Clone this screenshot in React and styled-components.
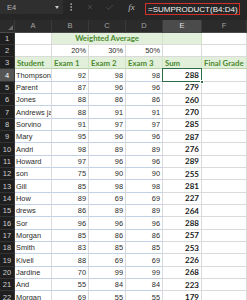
import React from "react";
import styled, { createGlobalStyle } from "styled-components";
import { X, Check, EllipsisVertical } from "lucide-react";

const Global = createGlobalStyle`
  html, body { margin: 0; padding: 0; background: #262626; }
  body { font-family: "Liberation Sans", Arial, sans-serif; overflow: hidden; }
`;

const Page = styled.div`
  width: 247px;
  height: 300px;
  overflow: hidden;
  background: #262626;
`;

const Bar = styled.div`
  display: flex;
  align-items: flex-start;
  height: 17px;
  margin-bottom: 3px;
`;

const NameBox = styled.div`
  width: 63px;
  height: 14px;
  background: #2f2f2f;
  display: flex;
  align-items: center;
  justify-content: space-between;
  padding: 0 4px 0 7px;
  box-sizing: border-box;
  color: #b5b5b5;
  font-size: 7.5px;
`;

const Caret = styled.span`
  width: 0;
  height: 0;
  border-left: 2.5px solid transparent;
  border-right: 2.5px solid transparent;
  border-top: 3px solid #c8c8c8;
`;

const IconSlot = styled.div`
  width: ${({ w }) => w}px;
  height: 14px;
  display: flex;
  align-items: center;
  justify-content: center;
  color: ${({ c }) => c || "#5c5c5c"};
`;

const Fx = styled.span`
  font-family: "Liberation Serif", serif;
  font-style: italic;
  font-size: 9px;
  color: #bdbdbd;
`;

const Formula = styled.div`
  margin-top: 3px;
  width: 95px;
  height: 12px;
  border: 1.5px solid #d2302c;
  box-sizing: border-box;
  display: flex;
  align-items: center;
  padding-left: 2px;
  color: #f2f2f2;
  font-size: 8px;
  white-space: nowrap;
`;

const Grid = styled.div`
  display: grid;
  grid-template-columns: 15px 37px 37px 37px 37px 39px 45px;
  grid-template-rows: 12.5px;
  grid-auto-rows: 12.33px;
`;

const ColHead = styled.div`
  background: ${({ active }) => (active ? "#4b4b4b" : "#2b2b2b")};
  color: ${({ active }) => (active ? "#e0e0e0" : "#a3a3a3")};
  font-size: 7.5px;
  display: flex;
  align-items: center;
  justify-content: center;
  border-right: 1px solid #3a3a3a;
  border-bottom: 1px solid #4a4a4a;
  box-sizing: border-box;
  position: relative;
`;

const Corner = styled(ColHead)`
  justify-content: flex-end;
  align-items: flex-end;
  padding: 0 1px 2px 0;
`;

const RowHead = styled.div`
  background: ${({ active }) => (active ? "#555555" : "#1f1f1f")};
  color: ${({ active }) => (active ? "#ffffff" : "#d0d0d0")};
  font-size: 7.5px;
  display: flex;
  align-items: center;
  justify-content: center;
  border-bottom: 1px solid #333;
  border-right: 1px solid #3a3a3a;
  box-sizing: border-box;
`;

const Cell = styled.div`
  grid-column: ${({ span }) => (span ? `span ${span}` : "auto")};
  background: ${({ bg }) => bg || "#ffffff"};
  color: ${({ color }) => color || "#2b2b2b"};
  font-family: ${({ head, sum }) =>
    head || sum ? `Lato, "Open Sans", sans-serif` : `"Liberation Sans", Arial, sans-serif`};
  font-weight: ${({ head, sum }) => (head || sum ? 700 : 400)};
  font-size: ${({ head, sum }) => (head ? "7.8px" : sum ? "8px" : "7.4px")};
  display: flex;
  align-items: center;
  justify-content: ${({ align }) =>
    align === "right" ? "flex-end" : align === "center" ? "center" : "flex-start"};
  padding: 0 ${({ tight }) => (tight ? "1px" : "2px")};
  box-sizing: border-box;
  border-right: 1px solid ${({ bg }) => (bg ? "#d0e3c4" : "#dadada")};
  border-bottom: 1px solid ${({ line }) => line || "#dadada"};
  white-space: nowrap;
  overflow: hidden;
  position: relative;
`;

const Selected = styled(Cell)`
  overflow: visible;
  z-index: 2;
  &::before {
    content: "";
    position: absolute;
    inset: -1px -1px -1px -1px;
    border: 1.5px solid #2f6b47;
  }
`;

const Handle = styled.span`
  position: absolute;
  right: -3px;
  bottom: -3px;
  width: 4px;
  height: 4px;
  background: #2f6b47;
  border: 1px solid #ffffff;
  box-sizing: border-box;
`;

const GREEN = "#e2efda";
const HEAD = "#4a8a2e";
const BLUE = "#c3d1e6";

const cols = ["A", "B", "C", "D", "E", "F"];

const data = [
  ["Thompson", 92, 98, 98, 288],
  ["Parent", 87, 96, 96, 279],
  ["Jones", 88, 86, 86, 260],
  ["Andrews ja", 88, 91, 91, 270],
  ["Sorvino", 91, 97, 97, 285],
  ["Mary", 95, 96, 96, 287],
  ["Andri", 98, 89, 89, 276],
  ["Howard", 97, 96, 96, 289],
  ["son", 75, 90, 90, 255],
  ["Gill", 85, 98, 98, 281],
  ["How", 89, 69, 69, 227],
  ["drews", 86, 89, 89, 264],
  ["Sor", 96, 96, 96, 288],
  ["Morgan", 85, 86, 86, 257],
  ["Smith", 83, 85, 85, 253],
  ["Kivell", 88, 69, 69, 226],
  ["Jardine", 70, 99, 99, 268],
  ["And", 55, 84, 84, 223],
  ["Morgan", 69, 55, 55, 179],
];

export default function App() {
  return (
    <Page>
      <Global />
      <Bar>
        <NameBox>
          E4
          <Caret />
        </NameBox>
        <IconSlot w={16} c="#a8a8a8">
          <EllipsisVertical size={10} strokeWidth={2.2} />
        </IconSlot>
        <IconSlot w={21}>
          <X size={8} strokeWidth={1.8} />
        </IconSlot>
        <IconSlot w={18}>
          <Check size={9} strokeWidth={1.8} />
        </IconSlot>
        <IconSlot w={27}>
          <Fx>fx</Fx>
        </IconSlot>
        <Formula>=SUMPRODUCT(B4:D4)</Formula>
      </Bar>

      <Grid>
        <Corner>
          <svg width="5" height="5" viewBox="0 0 5 5">
            <polygon points="5,0 5,5 0,5" fill="#6a6a6a" />
          </svg>
        </Corner>
        {cols.map((c) => (
          <ColHead key={c} active={c === "E"}>
            {c}
          </ColHead>
        ))}

        <RowHead>1</RowHead>
        <Cell />
        <Cell span={3} bg={GREEN} color={HEAD} head align="center">
          Weighted Average
        </Cell>
        <Cell bg={GREEN} />
        <Cell />

        <RowHead>2</RowHead>
        <Cell />
        <Cell align="right">20%</Cell>
        <Cell align="right">30%</Cell>
        <Cell align="right">50%</Cell>
        <Cell />
        <Cell />

        <RowHead>3</RowHead>
        {["Student", "Exam 1", "Exam 2", "Exam 3", "Sum", "Final Grade"].map((h) => (
          <Cell key={h} bg={GREEN} color={HEAD} head line="#b9d3a8">
            {h}
          </Cell>
        ))}

        {data.map((r, i) => {
          const n = i + 4;
          const SumCell = n === 4 ? Selected : Cell;
          return (
            <React.Fragment key={n}>
              <RowHead active={n === 4}>{n}</RowHead>
              <Cell line={BLUE} tight>{r[0]}</Cell>
              <Cell line={BLUE} align="right">{r[1]}</Cell>
              <Cell line={BLUE} align="right">{r[2]}</Cell>
              <Cell line={BLUE} align="right">{r[3]}</Cell>
              <SumCell sum align="right" color="#1a1a1a">
                {r[4]}
                {n === 4 && <Handle />}
              </SumCell>
              <Cell />
            </React.Fragment>
          );
        })}
      </Grid>
    </Page>
  );
}
